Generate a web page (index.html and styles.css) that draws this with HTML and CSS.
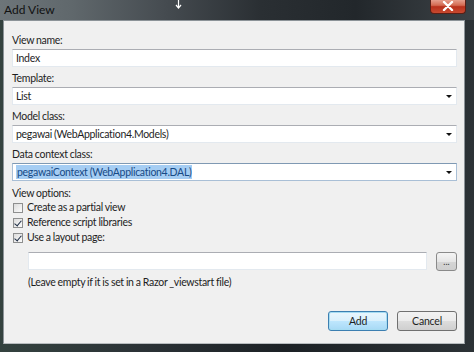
FILE: index.html
```html
<!DOCTYPE html>
<html lang="en">
<head>
    <meta charset="UTF-8">
    <title>Add View</title>
    <link rel="stylesheet" href="styles.css">
</head>
<body>
    <div class="titlebar">
        <span class="title">Add View</span>
        <svg class="cursor" width="9" height="10" viewBox="0 0 9 10">
            <path d="M4.5 0 V8" stroke="#fff" stroke-width="1.2"/>
            <path d="M2 6 L4.5 9 L7 6" fill="none" stroke="#fff" stroke-width="1.2"/>
        </svg>
        <div class="close">
            <svg width="12" height="10" viewBox="0 0 12 10">
                <path d="M2 1 L10 9 M10 1 L2 9" stroke="#fff" stroke-width="2.4" stroke-linecap="round"/>
            </svg>
        </div>
    </div>

    <div class="client">
        <div class="field">
            <label>View name:</label>
            <div class="box">Index</div>
        </div>
        <div class="field">
            <label>Template:</label>
            <div class="box select">List</div>
        </div>
        <div class="field">
            <label>Model class:</label>
            <div class="box select">pegawai (WebApplication4.Models)</div>
        </div>
        <div class="field">
            <label>Data context class:</label>
            <div class="box select focused"><span class="selected">pegawaiContext (WebApplication4.DAL)</span></div>
        </div>

        <label class="options-label">View options:</label>
        <div class="check-row"><span class="check"></span>Create as a partial view</div>
        <div class="check-row"><span class="check on"></span>Reference script libraries</div>
        <div class="check-row"><span class="check on"></span>Use a layout page:</div>

        <div class="layout-row">
            <div class="box layout-path"></div>
            <button class="browse">...</button>
        </div>
        <div class="hint">(Leave empty if it is set in a Razor _viewstart file)</div>

        <div class="buttons">
            <button class="btn default">Add</button>
            <button class="btn">Cancel</button>
        </div>
    </div>
</body>
</html>
```

FILE: styles.css
```css
body {
    margin: 0;
    width: 474px;
    height: 352px;
    overflow: hidden;
    font-family: "Lato", "Liberation Sans", sans-serif;
    font-size: 10.5px;
    letter-spacing: -0.3px;
    word-spacing: -0.3px;
    color: #1e1e1e;
    background: linear-gradient(90deg, #34423f 0%, #2b3236 30%, #1c2125 60%, #2c3236 100%);
}
.titlebar {
    position: relative;
    height: 20px;
    background: linear-gradient(90deg, #6d7579 0%, #60686c 15%, #454b50 35%, #2a2f33 55%, #22272b 75%, #3c4246 100%);
}
.title {
    display: block;
    padding: 3px 0 0 4px;
    font-size: 12px;
    letter-spacing: 0;
    word-spacing: 0;
    line-height: 14px;
    color: #111;
}
.cursor {
    position: absolute;
    left: 174px;
    top: -1px;
}
.close {
    position: absolute;
    left: 430px;
    top: -1px;
    width: 36px;
    height: 15px;
    box-sizing: border-box;
    border: 1px solid #5a1f16;
    border-top: none;
    border-radius: 0 0 4px 4px;
    background: linear-gradient(#e8a898 0%, #d46a52 45%, #b8301c 55%, #c84a30 100%);
    display: flex;
    align-items: center;
    justify-content: center;
}
.client {
    margin-left: 3px;
    width: 462px;
    height: 324px;
    box-sizing: border-box;
    border: 1px solid #8c9398;
    border-bottom-color: #b8bcbf;
    background: #f0f0f0;
    padding: 12px 7px 12px 8px;
    display: flex;
    flex-direction: column;
}
label {
    display: block;
    line-height: 15px;
    height: 15px;
}
.field label {
    margin-bottom: 1px;
}
.box {
    position: relative;
    height: 18px;
    box-sizing: border-box;
    background: #fff;
    border: 1px solid #e3e9ef;
    border-top-color: #abadb3;
    padding-left: 3px;
    line-height: 16px;
    margin-bottom: 4px;
}
.select::after {
    content: '';
    position: absolute;
    right: 4px;
    top: 7px;
    border-left: 3px solid transparent;
    border-right: 3px solid transparent;
    border-top: 3px solid #111;
}
.focused {
    border: 1px solid #a9bfd6;
    border-top-color: #7f99b3;
}
.selected {
    background: #a5cdf3;
    color: #174a86;
    padding: 1px 1px;
}
.options-label {
    margin-top: 1px;
    line-height: 14px;
    height: 14px;
}
.check-row {
    display: flex;
    align-items: center;
    height: 15px;
    line-height: 15px;
}
.check {
    width: 10px;
    height: 10px;
    box-sizing: border-box;
    margin: 0 4px 0 1px;
    border: 1px solid #8e8f8f;
    background: linear-gradient(135deg, #dcdcdc, #fbfbfb);
    position: relative;
}
.check.on::after {
    content: '';
    position: absolute;
    left: 2px;
    top: 0px;
    width: 3px;
    height: 6px;
    border-right: 1.5px solid #1c2c44;
    border-bottom: 1.5px solid #1c2c44;
    transform: rotate(40deg);
}
.layout-row {
    display: flex;
    align-items: flex-start;
    margin: 7px 0 0 16px;
}
.layout-path {
    width: 400px;
    margin-bottom: 0;
}
.browse {
    margin-left: 9px;
    width: 21px;
    height: 19px;
    padding: 0;
    border: 1px solid #8a8a8a;
    border-radius: 3px;
    background: linear-gradient(#f4f4f4 0%, #e6e6e6 50%, #d5d5d5 51%, #cfcfcf 100%);
    font-family: inherit;
    font-size: 9px;
    line-height: 10px;
    color: #333;
}
.hint {
    margin: 4px 0 0 16px;
    line-height: 15px;
}
.buttons {
    margin-top: auto;
    display: flex;
    justify-content: flex-end;
    gap: 9px;
}
.btn {
    width: 60px;
    height: 20px;
    padding: 0;
    border: 1px solid #707070;
    border-radius: 3px;
    background: linear-gradient(#f2f2f2 0%, #ebebeb 50%, #dddddd 51%, #cfcfcf 100%);
    font-family: inherit;
    font-size: 10.5px;
    letter-spacing: -0.2px;
    color: #1e1e1e;
}
.btn.default {
    border-color: #3c7fb1;
    box-shadow: inset 0 0 0 1px #a6dcf2;
    background: linear-gradient(#eaf6fd 0%, #d9f0fc 50%, #bee6fd 51%, #a7d9f5 100%);
}
```
